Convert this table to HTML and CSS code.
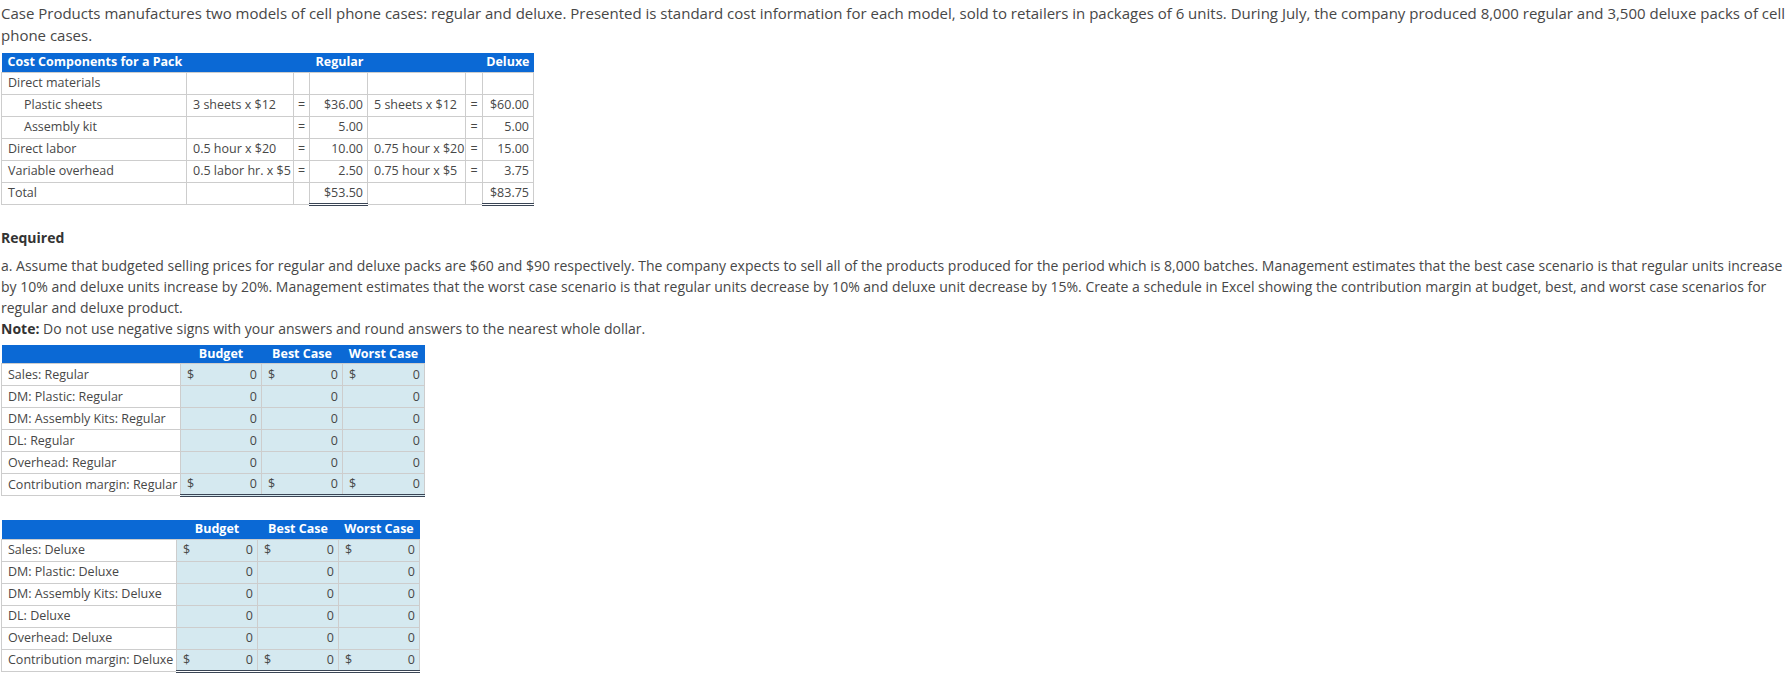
FILE: index.html
```html
<!DOCTYPE html>
<html lang="en">
<head>
  <meta charset="UTF-8" />
  <title>Case Products</title>
  <link rel="stylesheet" href="styles.css">
</head>
<body>
  <p class="intro">Case Products manufactures two models of cell phone cases: regular and deluxe. Presented is standard cost information for each model, sold to retailers in packages of 6 units. During July, the company produced 8,000 regular and 3,500 deluxe packs of cell phone cases.</p>

  <table class="cost-table">
    <colgroup>
      <col style="width:185px"><col style="width:107px"><col style="width:16px"><col style="width:58px">
      <col style="width:98px"><col style="width:17px"><col style="width:51px">
    </colgroup>
    <thead>
      <tr>
        <th class="left">Cost Components for a Pack</th>
        <th colspan="3">Regular</th>
        <th colspan="3">Deluxe</th>
      </tr>
    </thead>
    <tbody>
      <tr>
        <td>Direct materials</td>
        <td></td><td></td><td></td><td></td><td></td><td></td>
      </tr>
      <tr>
        <td class="indent">Plastic sheets</td>
        <td>3 sheets x $12</td><td class="eq">=</td><td class="num">$36.00</td>
        <td>5 sheets x $12</td><td class="eq">=</td><td class="num">$60.00</td>
      </tr>
      <tr>
        <td class="indent">Assembly kit</td>
        <td></td><td class="eq">=</td><td class="num">5.00</td>
        <td></td><td class="eq">=</td><td class="num">5.00</td>
      </tr>
      <tr>
        <td>Direct labor</td>
        <td>0.5 hour x $20</td><td class="eq">=</td><td class="num">10.00</td>
        <td>0.75 hour x $20</td><td class="eq">=</td><td class="num">15.00</td>
      </tr>
      <tr>
        <td>Variable overhead</td>
        <td>0.5 labor hr. x $5</td><td class="eq">=</td><td class="num">2.50</td>
        <td>0.75 hour x $5</td><td class="eq">=</td><td class="num">3.75</td>
      </tr>
      <tr>
        <td>Total</td>
        <td></td><td></td><td class="num total">$53.50</td>
        <td></td><td></td><td class="num total">$83.75</td>
      </tr>
    </tbody>
  </table>

  <h3 class="required">Required</h3>
  <p class="task">a. Assume that budgeted selling prices for regular and deluxe packs are $60 and $90 respectively. The company expects to sell all of the products produced for the period which is 8,000 batches. Management estimates that the best case scenario is that regular units increase by 10% and deluxe units increase by 20%. Management estimates that the worst case scenario is that regular units decrease by 10% and deluxe unit decrease by 15%. Create a schedule in Excel showing the contribution margin at budget, best, and worst case scenarios for regular and deluxe product.<br><b>Note:</b> Do not use negative signs with your answers and round answers to the nearest whole dollar.</p>

  <table class="answer-table">
    <colgroup>
      <col style="width:179px"><col style="width:81px"><col style="width:81px"><col style="width:82px">
    </colgroup>
    <thead>
      <tr><th></th><th>Budget</th><th>Best Case</th><th>Worst Case</th></tr>
    </thead>
    <tbody>
      <tr>
        <td>Sales: Regular</td>
        <td class="val"><span class="cur">$</span>0</td>
        <td class="val"><span class="cur">$</span>0</td>
        <td class="val"><span class="cur">$</span>0</td>
      </tr>
      <tr><td>DM: Plastic: Regular</td><td class="val">0</td><td class="val">0</td><td class="val">0</td></tr>
      <tr><td>DM: Assembly Kits: Regular</td><td class="val">0</td><td class="val">0</td><td class="val">0</td></tr>
      <tr><td>DL: Regular</td><td class="val">0</td><td class="val">0</td><td class="val">0</td></tr>
      <tr><td>Overhead: Regular</td><td class="val">0</td><td class="val">0</td><td class="val">0</td></tr>
      <tr>
        <td>Contribution margin: Regular</td>
        <td class="val total"><span class="cur">$</span>0</td>
        <td class="val total"><span class="cur">$</span>0</td>
        <td class="val total"><span class="cur">$</span>0</td>
      </tr>
    </tbody>
  </table>

  <table class="answer-table deluxe">
    <colgroup>
      <col style="width:175px"><col style="width:81px"><col style="width:81px"><col style="width:81px">
    </colgroup>
    <thead>
      <tr><th></th><th>Budget</th><th>Best Case</th><th>Worst Case</th></tr>
    </thead>
    <tbody>
      <tr>
        <td>Sales: Deluxe</td>
        <td class="val"><span class="cur">$</span>0</td>
        <td class="val"><span class="cur">$</span>0</td>
        <td class="val"><span class="cur">$</span>0</td>
      </tr>
      <tr><td>DM: Plastic: Deluxe</td><td class="val">0</td><td class="val">0</td><td class="val">0</td></tr>
      <tr><td>DM: Assembly Kits: Deluxe</td><td class="val">0</td><td class="val">0</td><td class="val">0</td></tr>
      <tr><td>DL: Deluxe</td><td class="val">0</td><td class="val">0</td><td class="val">0</td></tr>
      <tr><td>Overhead: Deluxe</td><td class="val">0</td><td class="val">0</td><td class="val">0</td></tr>
      <tr>
        <td>Contribution margin: Deluxe</td>
        <td class="val total"><span class="cur">$</span>0</td>
        <td class="val total"><span class="cur">$</span>0</td>
        <td class="val total"><span class="cur">$</span>0</td>
      </tr>
    </tbody>
  </table>
</body>
</html>
```

FILE: styles.css
```css
* {
  box-sizing: border-box;
}

body {
  margin: 0;
  padding: 2px 0 0 1px;
  font-family: 'Open Sans', 'Noto Sans', sans-serif;
  font-size: 14px;
  color: #474747;
  background: #fff;
}

.intro {
  margin: 0;
  font-size: 15px;
  line-height: 22px;
}

table {
  border-collapse: collapse;
  table-layout: fixed;
  font-size: 12.5px;
}

th {
  background: #0b69d5;
  color: #fff;
  font-weight: 700;
  height: 19px;
  padding: 0 4px;
  text-align: right;
  line-height: 18px;
}

th.left {
  text-align: left;
  padding-left: 6px;
}

td {
  border: 1px solid #cdcdcd;
  height: 22px;
  padding: 0 6px;
  line-height: 20px;
  white-space: nowrap;
}

/* Cost table */
.cost-table {
  width: 532px;
  margin-top: 7px;
}

.cost-table td.indent {
  padding-left: 22px;
}

.cost-table td.eq {
  text-align: center;
  padding: 0;
}

.cost-table td.num {
  text-align: right;
  padding: 0 4px 0 2px;
}

.cost-table td.total,
.answer-table td.total {
  border-top: 1px solid #111;
  border-bottom: 3px double #3a4555;
}

.required {
  margin: 21px 0 6px;
  font-size: 14px;
  font-weight: 700;
  color: #333;
  line-height: 22px;
}

.task {
  margin: 0 0 6px;
  line-height: 21px;
}

.task b {
  color: #333;
}

/* Answer tables */
.answer-table {
  width: 423px;
}

.answer-table th {
  text-align: center;
  padding: 0 1px;
}

.answer-table td.val {
  background: #d5e9f0;
  text-align: right;
  padding: 0 4px 0 6px;
}

.answer-table .cur {
  float: left;
}

.answer-table.deluxe {
  width: 418px;
  margin-top: 23px;
}
```
